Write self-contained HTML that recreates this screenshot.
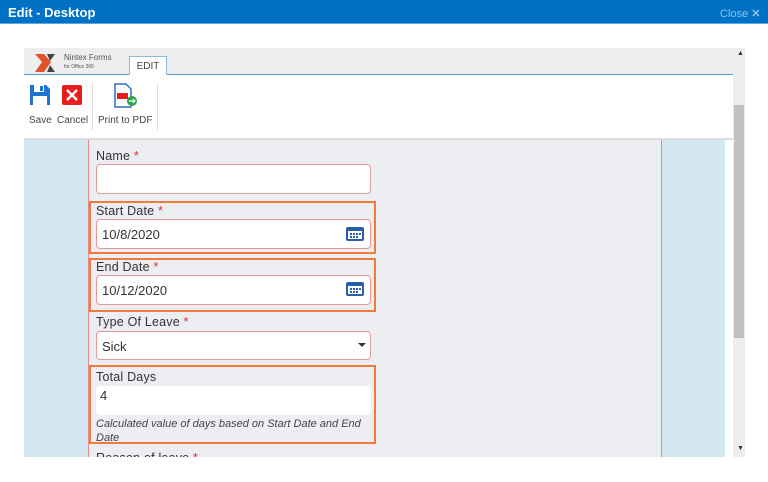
<!DOCTYPE html>
<html><head><style>
*{margin:0;padding:0;box-sizing:border-box}
body{width:768px;height:482px;overflow:hidden;background:#fff;font-family:"Liberation Sans",sans-serif;position:relative}
.a{position:absolute}
.lbl{font-size:12.5px;color:#333;letter-spacing:0.2px}
.req{color:#e03030}
.inp{background:#fff;border:1px solid #e39a9a;border-radius:4px}
.ob{border:2px solid #f27a3b}
.val{font-size:13px;color:#333}
</style></head><body>
<div class="a" style="left:0;top:0;width:768px;height:24px;background:#0072c6;border-bottom:1px solid #5aa8e0"></div>
<div class="a" style="left:8px;top:5px;color:#fff;font-weight:bold;font-size:13px">Edit - Desktop</div>
<div class="a" style="left:720px;top:7px;color:#8cc3ec;font-size:11px">Close <b>✕</b></div>

<div class="a" style="left:24px;top:48px;width:709px;height:26px;background:#eeeeee"></div>
<div class="a" style="left:733px;top:48px;width:12px;height:409px;background:#eeeeee"></div>
<div class="a" style="left:734px;top:105px;width:10px;height:233px;background:#c0c0c0"></div>
<div class="a" style="left:737px;top:50px;font-size:7px;color:#333">▲</div>
<div class="a" style="left:737px;top:445px;font-size:7px;color:#333">▼</div>
<svg class="a" style="left:35px;top:52px" width="30" height="22"><path d="M0 2h9l7 8-7 10H0l7-10z" fill="#e2522a"/><path d="M12 2h8l-5 7z M15 13l5 7h-8z" fill="#444"/></svg>
<div class="a" style="left:64px;top:54px;font-size:8px;color:#555;line-height:8px">Nintex Forms<br><span style="font-size:5px">for Office 365</span></div>
<div class="a" style="left:24px;top:74px;width:709px;height:1px;background:#5b9bd5"></div>
<div class="a" style="left:129px;top:56px;width:38px;height:19px;background:#fff;border:1px solid #8db8e0;border-bottom:none;font-size:10px;color:#444;text-align:center;padding-top:4px">EDIT</div>
<svg class="a" style="left:29px;top:84px" width="22" height="22"><path d="M1 1h16l4 4v16H1z" fill="#1e74d0"/><rect x="5" y="1" width="10" height="7" fill="#fff"/><rect x="11" y="2" width="3" height="5" fill="#1e74d0"/><rect x="4" y="12" width="14" height="9" fill="#fff"/></svg>
<svg class="a" style="left:61px;top:84px" width="22" height="22"><rect x="1" y="1" width="20" height="20" rx="2" fill="#e81c1c"/><path d="M6 6l10 10M16 6L6 16" stroke="#fff" stroke-width="2.5"/></svg>
<div class="a" style="left:92px;top:83px;width:1px;height:47px;background:#ddd"></div>
<svg class="a" style="left:112px;top:83px" width="28" height="26"><path d="M3 1h11l5 5v18H3z" fill="#fff" stroke="#2a6fc9" stroke-width="1.5"/><rect x="5" y="10" width="11" height="6" fill="#e81c1c"/><circle cx="20" cy="18" r="5" fill="#2da44e"/><path d="M17 18h6M21 16l2 2-2 2" stroke="#fff" stroke-width="1.2" fill="none"/></svg>
<div class="a" style="left:157px;top:83px;width:1px;height:47px;background:#ddd"></div>
<div class="a" style="left:29px;top:115px;font-size:10px;color:#444">Save</div>
<div class="a" style="left:57px;top:115px;font-size:10px;color:#444">Cancel</div>
<div class="a" style="left:98px;top:115px;font-size:10px;color:#444">Print to PDF</div>
<div class="a" style="left:24px;top:138px;width:709px;height:2px;background:#ddd"></div>

<div class="a" style="left:24px;top:140px;width:64px;height:317px;background:#d3e7f0"></div>
<div class="a" style="left:662px;top:140px;width:63px;height:317px;background:#d3e7f0"></div>
<div class="a" style="left:89px;top:140px;width:572px;height:317px;background:#eceef2"></div>
<div class="a" style="left:88px;top:140px;width:1px;height:317px;background:#e58a8a"></div>
<div class="a" style="left:661px;top:140px;width:1px;height:317px;background:#e58a8a"></div>

<div class="a lbl" style="left:96px;top:149px">Name <span class="req">*</span></div>
<div class="a inp" style="left:96px;top:164px;width:275px;height:30px"></div>

<div class="a ob" style="left:89px;top:201px;width:287px;height:53px"></div>
<div class="a lbl" style="left:96px;top:204px">Start Date <span class="req">*</span></div>
<div class="a inp val" style="left:96px;top:219px;width:275px;height:30px;padding:7px 5px">10/8/2020</div>
<svg class="a" style="left:346px;top:226px" width="18" height="15"><rect x="1" y="2" width="16" height="12" rx="1" fill="#fff" stroke="#2a5ea8" stroke-width="2"/><rect x="1" y="2" width="16" height="3" fill="#2a5ea8"/><g fill="#2a5ea8"><rect x="4" y="7" width="2" height="2"/><rect x="7" y="7" width="2" height="2"/><rect x="10" y="7" width="2" height="2"/><rect x="13" y="7" width="2" height="2"/><rect x="4" y="10" width="2" height="2"/><rect x="7" y="10" width="2" height="2"/><rect x="10" y="10" width="2" height="2"/></g></svg>

<div class="a ob" style="left:89px;top:258px;width:287px;height:54px"></div>
<div class="a lbl" style="left:96px;top:260px">End Date <span class="req">*</span></div>
<div class="a inp val" style="left:96px;top:275px;width:275px;height:30px;padding:7px 5px">10/12/2020</div>
<svg class="a" style="left:346px;top:281px" width="18" height="15"><rect x="1" y="2" width="16" height="12" rx="1" fill="#fff" stroke="#2a5ea8" stroke-width="2"/><rect x="1" y="2" width="16" height="3" fill="#2a5ea8"/><g fill="#2a5ea8"><rect x="4" y="7" width="2" height="2"/><rect x="7" y="7" width="2" height="2"/><rect x="10" y="7" width="2" height="2"/><rect x="13" y="7" width="2" height="2"/><rect x="4" y="10" width="2" height="2"/><rect x="7" y="10" width="2" height="2"/><rect x="10" y="10" width="2" height="2"/></g></svg>

<div class="a lbl" style="left:96px;top:315px">Type Of Leave <span class="req">*</span></div>
<div class="a inp val" style="left:96px;top:331px;width:275px;height:29px;padding:7px 5px">Sick</div>
<div class="a" style="left:358px;top:343px;border-left:4px solid transparent;border-right:4px solid transparent;border-top:4px solid #333"></div>

<div class="a ob" style="left:89px;top:365px;width:287px;height:79px"></div>
<div class="a lbl" style="left:96px;top:370px">Total Days</div>
<div class="a val" style="left:96px;top:386px;width:275px;height:29px;background:#fff;border-radius:4px;padding:2px 4px">4</div>
<div class="a" style="left:96px;top:417px;font-size:11px;font-style:italic;color:#444;line-height:14px;width:270px">Calculated value of days based on Start Date and End Date</div>
<div class="a lbl" style="left:96px;top:451px;height:6px;overflow:hidden">Reason of leave <span class="req">*</span></div>
<div class="a" style="left:0;top:457px;width:768px;height:25px;background:#fff"></div>
</body></html>
